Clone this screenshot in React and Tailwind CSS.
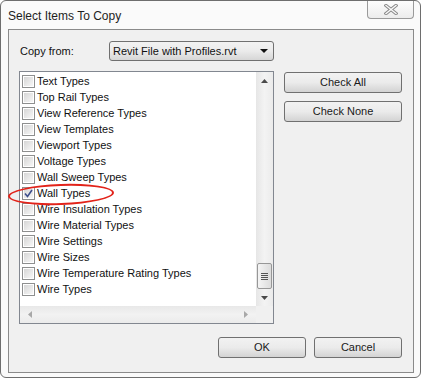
import React from "react";

const items = [
  "Text Types",
  "Top Rail Types",
  "View Reference Types",
  "View Templates",
  "Viewport Types",
  "Voltage Types",
  "Wall Sweep Types",
  "Wall Types",
  "Wire Insulation Types",
  "Wire Material Types",
  "Wire Settings",
  "Wire Sizes",
  "Wire Temperature Rating Types",
  "Wire Types",
];

const CheckBox = ({ checked }) => (
  <div className="w-[13px] h-[13px] shrink-0 border border-[#8e8f8f] bg-white p-[1px]">
    <div className="w-full h-full bg-linear-to-br from-[#d6d6d6] to-[#f7f7f7] flex items-center justify-center">
      {checked && (
        <svg width="9" height="9" viewBox="0 0 9 9">
          <path d="M1 4.5 L3.5 7.5 L8 1" fill="none" stroke="#3d4f8c" strokeWidth="1.6" />
        </svg>
      )}
    </div>
  </div>
);

const WinButton = ({ children, className }) => (
  <div
    className={
      "h-[21px] border border-[#707070] rounded-[3px] bg-linear-to-b from-[#f2f2f2] via-[#ebebeb] to-[#d3d3d3] flex items-center justify-center text-[#1a1a1a] " +
      className
    }
  >
    {children}
  </div>
);

const Arrow = ({ dir }) => {
  const d = {
    up: "M0 4 L3.5 0 L7 4 Z",
    down: "M0 0 L7 0 L3.5 4 Z",
  }[dir];
  return (
    <svg width="7" height="4" viewBox="0 0 7 4">
      <path d={d} fill="#4a4a4a" />
    </svg>
  );
};

const HArrow = ({ dir }) => (
  <svg width="4" height="7" viewBox="0 0 4 7">
    <path d={dir === "left" ? "M4 0 L0 3.5 L4 7 Z" : "M0 0 L4 3.5 L0 7 Z"} fill="#a8a8a8" />
  </svg>
);

export default function App() {
  return (
    <div
      className="w-[421px] h-[379px] bg-white text-[11px] text-[#111]"
      style={{ fontFamily: '"Liberation Sans", Arial, sans-serif' }}
    >
      <div className="relative w-[421px] h-[378px] border border-[#6e6e6e] rounded-[6px] bg-[#fafafa] flex flex-col">
        {/* title bar */}
        <div className="h-[28px] flex items-start justify-between">
          <div className="pl-[7px] pt-[7px] text-[12px] leading-[16px] text-[#1e1e1e]">Select Items To Copy</div>
          <div className="mr-[6px] w-[47px] h-[18px] border border-t-0 border-[#9a9a9a] rounded-b-[4px] bg-linear-to-b from-[#fdfdfd] to-[#ececec] flex items-center justify-center">
            <svg width="14" height="11" viewBox="0 0 14 11">
              <path d="M2 1.5 L12 9.5 M12 1.5 L2 9.5" stroke="#8a8a8a" strokeWidth="3.4" strokeLinecap="square" />
              <path d="M2 1.5 L12 9.5 M12 1.5 L2 9.5" stroke="#fafafa" strokeWidth="1.4" strokeLinecap="square" />
            </svg>
          </div>
        </div>

        {/* client area */}
        <div className="ml-[7px] w-[406px] h-[344px] border border-[#8a8a8a] bg-[#f0f0f0] pl-[10px] pt-[11px] pr-[11px] flex flex-col">
          <div className="h-[20px] flex items-center">
            <div className="w-[90px] pl-[1px]">Copy from:</div>
            <div className="w-[165px] h-[20px] border border-[#707070] rounded-[3px] bg-linear-to-b from-[#f2f2f2] via-[#ebebeb] to-[#d6d6d6] flex items-center justify-between pl-[3px] pr-[5px]">
              <span>Revit File with Profiles.rvt</span>
              <svg width="8" height="4" viewBox="0 0 8 4">
                <path d="M0 0 L8 0 L4 4 Z" fill="#111" />
              </svg>
            </div>
          </div>

          <div className="mt-[10px] flex items-start">
            {/* list box */}
            <div className="w-[255px] h-[253px] border border-[#828790] bg-white flex flex-col">
              <div className="flex h-[234px]">
                <div className="flex-1 pl-[2px] pt-[1px] flex flex-col overflow-hidden">
                  {items.map((item) => (
                    <div key={item} className="h-[16px] flex items-center gap-[2px] whitespace-nowrap">
                      <CheckBox checked={item === "Wall Types"} />
                      <span className="leading-[16px]">{item}</span>
                    </div>
                  ))}
                </div>
                <div className="w-[17px] bg-linear-to-r from-[#e6e6e6] via-[#f3f3f3] to-[#ebebeb] flex flex-col">
                  <div className="h-[17px] flex items-center justify-center">
                    <Arrow dir="up" />
                  </div>
                  <div className="flex-1" />
                  <div className="h-[26px] mx-[1px] border border-[#979797] rounded-[2px] bg-linear-to-r from-[#f4f4f4] to-[#dcdcdc] flex flex-col items-center justify-center gap-[1px]">
                    <div className="w-[7px] h-[1px] bg-[#555]" />
                    <div className="w-[7px] h-[1px] bg-[#555]" />
                    <div className="w-[7px] h-[1px] bg-[#555]" />
                    <div className="w-[7px] h-[1px] bg-[#555]" />
                  </div>
                  <div className="h-[17px] flex items-center justify-center">
                    <Arrow dir="down" />
                  </div>
                </div>
              </div>
              <div className="flex h-[17px]">
                <div className="flex-1 bg-linear-to-b from-[#e8e8e8] via-[#f2f2f2] to-[#ebebeb] flex items-center justify-between px-[8px]">
                  <HArrow dir="left" />
                  <HArrow dir="right" />
                </div>
                <div className="w-[17px] bg-[#f0f0f0]" />
              </div>
            </div>

            {/* side buttons */}
            <div className="ml-[10px] mt-[1px] flex flex-col gap-[8px]">
              <WinButton className="w-[118px]">Check All</WinButton>
              <WinButton className="w-[118px]">Check None</WinButton>
            </div>
          </div>

          <div className="mt-[13px] flex justify-end gap-[8px]">
            <WinButton className="w-[88px]">OK</WinButton>
            <WinButton className="w-[88px]">Cancel</WinButton>
          </div>
        </div>

        {/* annotation ellipse */}
        <div className="absolute left-[7px] top-[183px] w-[106px] h-[21px] border-2 border-[#e2231a] rounded-[50%] -rotate-2" />
      </div>
    </div>
  );
}
